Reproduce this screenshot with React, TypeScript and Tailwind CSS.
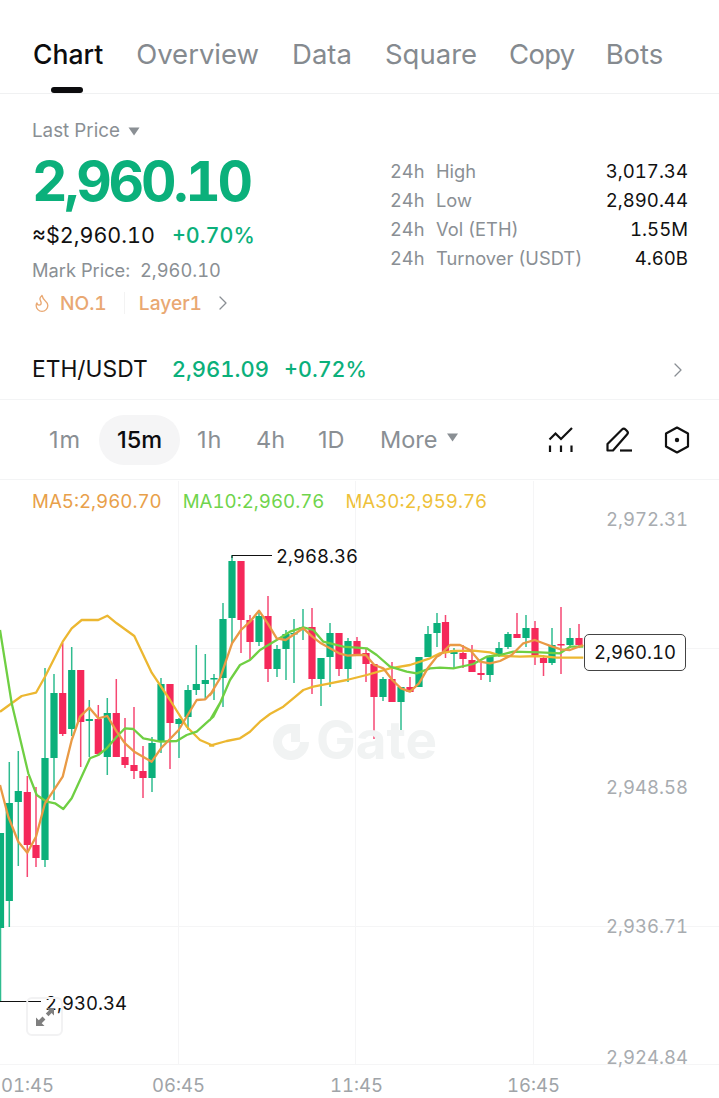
import { Flame, ChevronRight } from "lucide-react";

const G = "#0bb07b";
const R = "#f5285a";

// [x, wickTop, bodyTop, bodyBottom, wickBottom, up]
const candles: [number, number, number, number, number, number][] = [
  [0.5, 833, 833, 928, 1002, 1],
  [9.3, 762, 803, 901, 927, 1],
  [18.3, 751, 791, 802, 866, 1],
  [27.3, 776, 792, 845, 877, 0],
  [36, 787, 845, 858, 867, 0],
  [45, 668, 758, 860, 867, 1],
  [54, 674, 693, 758, 800, 1],
  [62.7, 643, 693, 734, 736, 0],
  [71.7, 647, 670, 729, 736, 1],
  [80.7, 670, 670, 722, 767, 0],
  [89.3, 700, 719, 721, 757, 1],
  [98.3, 705, 719, 754, 755, 0],
  [107.3, 698, 713, 757, 775, 1],
  [116.3, 679, 713, 757, 757, 0],
  [125, 718, 757, 765, 768, 0],
  [134, 707, 765, 771, 779, 0],
  [143, 746, 771, 778, 798, 0],
  [152, 737, 743, 778, 792, 1],
  [161, 678, 684, 742, 753, 1],
  [170, 684, 684, 723, 769, 0],
  [179, 718, 719, 724, 758, 1],
  [188, 685, 690, 717, 730, 1],
  [196.3, 645, 684, 690, 695, 1],
  [205.3, 654, 680, 684, 700, 1],
  [214, 674, 678, 679, 700, 1],
  [223, 603, 619, 678, 707, 1],
  [232, 555, 561, 618, 643, 1],
  [241, 561, 561, 620, 653, 0],
  [250, 615, 620, 642, 660, 0],
  [259, 612, 616, 642, 646, 1],
  [268, 596, 616, 669, 682, 0],
  [277, 645, 649, 669, 677, 1],
  [286, 630, 634, 649, 680, 1],
  [294, 619, 633, 634, 683, 1],
  [303, 609, 627, 629, 640, 1],
  [312, 608, 627, 679, 694, 0],
  [321, 658, 658, 679, 706, 1],
  [330, 623, 633, 657, 687, 1],
  [339, 633, 633, 669, 676, 0],
  [348, 638, 641, 669, 682, 1],
  [357, 637, 641, 655, 656, 0],
  [366, 648, 653, 664, 682, 0],
  [374, 664, 664, 697, 739, 0],
  [383, 677, 679, 697, 701, 1],
  [392, 662, 679, 702, 702, 0],
  [401, 687, 687, 702, 731, 1],
  [410, 677, 687, 692, 692, 0],
  [419, 657, 657, 687, 687, 1],
  [428, 626, 634, 657, 657, 1],
  [437, 613, 623, 633, 647, 1],
  [445.5, 615, 622, 653, 658, 0],
  [454, 648, 650, 654, 668, 1],
  [463, 645, 653, 659, 668, 0],
  [472, 645, 660, 672, 672, 0],
  [481, 663, 673, 675, 680, 0],
  [490, 655, 657, 675, 682, 1],
  [499, 642, 648, 655, 657, 1],
  [508, 632, 634, 647, 649, 1],
  [517, 613, 634, 638, 638, 0],
  [526, 615, 628, 638, 647, 1],
  [535, 621, 628, 655, 665, 0],
  [543.5, 655, 658, 663, 676, 0],
  [552, 628, 645, 663, 665, 1],
  [561, 607, 644, 645, 674, 0],
  [570, 628, 638, 645, 648, 1],
  [579, 624, 638, 645, 648, 0],
];

const pts = (a: number[][], ox: number, oy: number) =>
  a.map(([x, y]) => `${(ox + x / 3).toFixed(1)},${(oy + y / 3).toFixed(1)}`).join(" ");

const ma30 =
  pts([[0,515],[35,490],[65,468],[108,458],[135,410],[188,305],[215,265],[245,240],[295,240],[322,227],[350,250],[403,288],[455,398],[510,480],[560,560],[600,600],[640,617]], 0, 540) +
  " " +
  pts([[0,617],[50,603],[90,595],[120,575],[150,545],[180,522],[220,500],[250,475],[280,450],[310,440],[360,430],[410,420],[470,405],[540,385],[600,375],[660,355],[690,340]], 210, 540) +
  " " +
  pts([[0,190],[40,183],[100,182],[150,187],[180,197],[240,200],[300,198],[350,203],[430,203]], 440, 590);

const ma10 =
  pts([[0,270],[35,490],[85,700],[110,765],[140,785],[165,790],[190,807],[215,775],[270,655],[295,645],[320,625],[350,590],[375,565],[400,567],[430,595],[480,605],[530,603],[560,585],[590,575],[640,530],[665,480]], 0, 540) +
  " " +
  pts([[0,540],[30,490],[60,420],[90,375],[120,360],[150,330],[200,300],[240,275],[280,262],[310,270],[340,305],[400,320],[470,325],[500,345],[540,380],[590,395],[620,400],[660,385],[690,383]], 210, 540) +
  " " +
  pts([[0,233],[40,235],[100,222],[140,200],[180,195],[220,185],[300,187],[360,190],[390,170],[430,170]], 440, 590);

const ma5 =
  pts([[0,735],[25,830],[55,905],[82,938],[108,890],[135,790],[165,745],[188,710],[215,600],[240,530],[268,503],[295,535],[322,528],[350,575],[375,610],[403,635],[455,665],[483,625],[536,570],[563,525],[590,480],[616,478],[642,450]], 0, 540) +
  " " +
  pts([[0,465],[30,415],[66,310],[93,270],[120,245],[147,212],[173,250],[200,295],[227,300],[280,265],[307,290],[333,310],[387,340],[413,347],[440,345],[467,345],[493,375],[520,385],[547,420],[573,445],[600,455],[627,430],[653,385],[680,350]], 210, 540) +
  " " +
  pts([[0,195],[30,165],[60,165],[90,180],[120,215],[150,220],[180,213],[215,195],[250,160],[284,150],[310,160],[337,170],[363,178],[390,180],[430,165]], 440, 590);

function Caret({ className }: { className: string }) {
  return (
    <svg viewBox="0 0 12 9" className={className} fill="currentColor">
      <path d="M0.5 0.5h11L6 8.5z" />
    </svg>
  );
}

const stats = [
  ["High", "3,017.34"],
  ["Low", "2,890.44"],
  ["Vol (ETH)", "1.55M"],
  ["Turnover (USDT)", "4.60B"],
];

export default function App() {
  return (
    <div className="w-[719px] h-[1098px] overflow-hidden bg-white font-['Inter','Liberation_Sans',sans-serif] text-[#111]">
      {/* Tabs */}
      <div className="relative flex h-[94px] items-start border-b border-[#f0f1f2] pt-[37px] pl-[33px] text-[27.5px] leading-[34px] text-[#858a8f]">
        <span className="mr-[33px] text-[26.5px] font-medium text-[#0c0c0e]">Chart</span>
        <span>Overview</span>
        <span className="ml-[33px]">Data</span>
        <span className="ml-[33px]">Square</span>
        <span className="ml-[32px] tracking-[-0.7px]">Copy</span>
        <span className="ml-[31px]">Bots</span>
        <span className="absolute left-[51px] top-[87px] h-[6px] w-[32px] rounded-full bg-[#0c0c0e]" />
      </div>

      {/* Price info */}
      <div className="flex h-[246px] items-start pl-[32px] tabular-nums">
        <div className="w-[358px] shrink-0 pt-[25px]">
          <div className="flex items-center gap-[8px] text-[18.8px] leading-[24px] text-[#8a8f94]">
            Last Price
            <Caret className="h-[9px] w-[12px]" />
          </div>
          <div className="mt-[5px] text-[55px] font-bold leading-[66px] tracking-[-3.1px] text-[#0bb07b]">2,960.10</div>
          <div className="mt-[7px] flex items-center text-[21.5px] leading-[28px]">
            <span>≈$2,960.10</span>
            <span className="ml-[17px] font-medium text-[#0bb07b]">+0.70%</span>
          </div>
          <div className="mt-[9px] text-[18.3px] leading-[24px] text-[#8a8f94]">Mark Price:&nbsp; 2,960.10</div>
          <div className="mt-[9px] flex items-center text-[19.2px] font-medium leading-[24px] text-[#e9a872]">
            <Flame size={20} strokeWidth={1.6} className="mr-[8px]" />
            <span>NO.1</span>
            <span className="ml-[17px] mr-[14px] h-[22px] w-px bg-[#f3f3f3]" />
            <span>Layer1</span>
            <ChevronRight size={24} strokeWidth={1.3} className="ml-[9px] text-[#8a8f94]" />
          </div>
        </div>
        <div className="w-[298px] pt-[63px]">
          {stats.map(([l, v]) => (
            <div key={l} className="flex h-[29px] items-center justify-between text-[18.3px]">
              <span className="flex text-[#8a8f94]">
                <span className="w-[46px]">24h</span>
                <span>{l}</span>
              </span>
              <span className="text-[18.6px] text-[#111]">{v}</span>
            </div>
          ))}
        </div>
      </div>

      {/* Pair row */}
      <div className="flex h-[60px] items-center border-b border-[#f3f4f5] pl-[32px] pr-[29px] text-[22px] tabular-nums">
        <span className="text-[22.8px]">ETH/USDT</span>
        <span className="ml-[24px] font-medium text-[#0bb07b]">2,961.09</span>
        <span className="ml-[15px] text-[21.5px] font-medium text-[#0bb07b]">+0.72%</span>
        <ChevronRight size={24} strokeWidth={1.3} className="ml-auto text-[#8a8f94]" />
      </div>

      {/* Timeframes */}
      <div className="flex h-[80px] items-center border-b border-[#f3f4f5] pr-[29px] text-[23.5px] text-[#8a8f94]">
        <span className="ml-[49px] w-[33px] tracking-[1px]">1m</span>
        <span className="ml-[17px] flex h-[50px] w-[81px] items-center justify-center rounded-[25px] bg-[#f5f5f6] font-medium text-[#0c0c0e]">15m</span>
        <span className="ml-[17px] w-[26px] tracking-[1px]">1h</span>
        <span className="ml-[33px] w-[27px]">4h</span>
        <span className="ml-[35px] w-[28px]">1D</span>
        <span className="ml-[34px]">More</span>
        <Caret className="ml-[9px] mb-[4px] h-[9px] w-[13px]" />
        <svg viewBox="0 0 26 26" className="ml-auto h-[26px] w-[26px]" fill="none" stroke="#111" strokeWidth="2.2">
          <path d="M1.5 12.5l6-6 5.5 5.5L24 1" />
          <path d="M2 18.5V25M13 18.5V25M23.5 18.5V25" />
        </svg>
        <svg viewBox="0 0 26 26" className="ml-[32px] h-[26px] w-[26px]" fill="none" stroke="#111" strokeWidth="2.2" strokeLinejoin="round">
          <path d="M1.5 23.5V17L16 2.5a2.5 2.5 0 0 1 3.5 0l1.5 1.5a2.5 2.5 0 0 1 0 3.5L7 23.5z" />
          <path d="M14 23.5H26" />
        </svg>
        <svg viewBox="0 0 26 28" className="ml-[32px] h-[28px] w-[26px]" fill="none" stroke="#111" strokeWidth="2.2" strokeLinejoin="round">
          <path d="M13 1.5L24 7.5V20.5L13 26.5L2 20.5V7.5z" />
          <circle cx="13" cy="14" r="2.2" fill="#111" stroke="none" />
        </svg>
      </div>

      {/* Chart canvas */}
      <div className="relative h-[618px] tabular-nums">
        <div className="flex gap-[21px] pl-[32px] pt-[9px] text-[18.7px] leading-[26px]">
          <span className="text-[#e8a04a]">MA5:2,960.70</span>
          <span className="text-[#6fd44c]">MA10:2,960.76</span>
          <span className="text-[#eec13a]">MA30:2,959.76</span>
        </div>

        <svg viewBox="0 480 719 618" className="absolute inset-0 h-[618px] w-[719px]">
          <g stroke="#f5f5f6" strokeWidth="1">
            <path d="M0 648.5H719M0 926.5H719M0 1064.5H719" />
            <path d="M178.5 481V1064M355.5 481V1064M533.5 481V1064" />
          </g>
          <g fill="#f1f3f3">
            <path d="M291 724a18 18 0 1 0 18 18h-18v-9h9v-9z" fillRule="evenodd" />
            <circle cx="291" cy="742" r="9" fill="#fff" />
            <rect x="291" y="733" width="9" height="9" />
          </g>
          {candles.map(([x, wt, bt, bb, wb, up], i) => (
            <g key={i} fill={up ? G : R}>
              <rect x={x - 0.75} y={wt} width="1.5" height={wb - wt} opacity="0.85" />
              <rect x={x - 3.6} y={bt} width="7.2" height={Math.max(bb - bt, 1.5)} />
            </g>
          ))}
          <polyline points={ma30} fill="none" stroke="#ecb731" strokeWidth="2.3" strokeLinejoin="round" />
          <polyline points={ma10} fill="none" stroke="#6fcf43" strokeWidth="2.3" strokeLinejoin="round" />
          <polyline points={ma5} fill="none" stroke="#e99a45" strokeWidth="2.3" strokeLinejoin="round" />
          <path d="M232 558V555.5H272" fill="none" stroke="#111" strokeWidth="1" />
          <path d="M0 1001.5H41" fill="none" stroke="#111" strokeWidth="1" />
        </svg>

        {/* Watermark */}
        <span className="absolute left-[316px] top-[228px] text-[53px] font-bold leading-[64px] text-[#f1f3f3]">Gate</span>

        {/* Y axis */}
        <span className="absolute right-[31px] top-[27px] text-[18.5px] leading-[24px] text-[#a8acb0]">2,972.31</span>
        <span className="absolute right-[31px] top-[295px] text-[18.5px] leading-[24px] text-[#a8acb0]">2,948.58</span>
        <span className="absolute right-[31px] top-[434px] text-[18.5px] leading-[24px] text-[#a8acb0]">2,936.71</span>
        <span className="absolute right-[31px] top-[565px] text-[18.5px] leading-[24px] text-[#a8acb0]">2,924.84</span>

        {/* X axis */}
        <span className="absolute left-[1px] top-[593px] text-[18.5px] leading-[24px] text-[#a0a4a8]">01:45</span>
        <span className="absolute left-[152px] top-[593px] text-[18.5px] leading-[24px] text-[#a0a4a8]">06:45</span>
        <span className="absolute left-[330px] top-[593px] text-[18.5px] leading-[24px] text-[#a0a4a8]">11:45</span>
        <span className="absolute left-[507px] top-[593px] text-[18.5px] leading-[24px] text-[#a0a4a8]">16:45</span>

        {/* High / low labels */}
        <span className="absolute left-[276px] top-[64px] text-[18.5px] leading-[24px] text-[#111]">2,968.36</span>
        <span className="absolute left-[45px] top-[511px] text-[18.5px] leading-[24px] text-[#111]">2,930.34</span>

        {/* Last price tag */}
        <span className="absolute left-[584px] top-[154px] flex h-[37px] w-[102px] items-center justify-center rounded-[5px] border border-[#444] bg-white text-[18.5px] text-[#111]">
          2,960.10
        </span>

        {/* Expand button */}
        <span className="absolute left-[26px] top-[517px] flex h-[39px] w-[37px] items-center justify-center rounded-[6px] border-2 border-[#f2f2f3]">
          <svg viewBox="0 0 20 20" className="h-[20px] w-[20px]" fill="#7f7f7f">
            <path d="M1 19V10.5L3.8 13.3L7.5 9.6L10.4 12.5L6.7 16.2L9.5 19z" />
            <path d="M19 1V8.5L16.6 6.1L13.5 9.2L10.8 6.5L13.9 3.4L11.5 1z" />
          </svg>
        </span>
      </div>
    </div>
  );
}
